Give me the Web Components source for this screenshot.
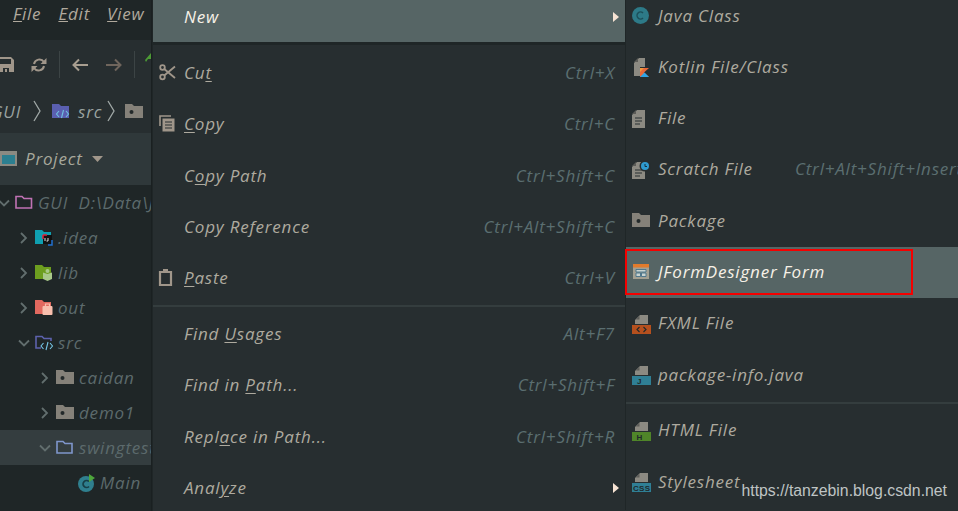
<!DOCTYPE html>
<html>
<head>
<meta charset="utf-8">
<title>IDE context menu</title>
<style>
  html, body { margin: 0; height: 100%; background: #272e30; overflow: hidden; }
  body { font: italic 17px/1 "Open Sans", sans-serif; letter-spacing: .8px; }
  u { text-underline-offset: 2px; text-decoration-thickness: 1px; }
</style>
</head>
<body>
<ide-app>
  <ide-sidebar slot="side">
    <tree-row depth="0" chevron="open" icon="folder-pink" dim="1">GUI&nbsp; D:\Data\Java</tree-row>
    <tree-row depth="1" chevron="closed" icon="folder-idea">.idea</tree-row>
    <tree-row depth="1" chevron="closed" icon="folder-lib">lib</tree-row>
    <tree-row depth="1" chevron="closed" icon="folder-out">out</tree-row>
    <tree-row depth="1" chevron="open" icon="folder-src">src</tree-row>
    <tree-row depth="2" chevron="closed" icon="package">caidan</tree-row>
    <tree-row depth="2" chevron="closed" icon="package">demo1</tree-row>
    <tree-row depth="2" chevron="open" icon="folder-blue" selected>swingtest</tree-row>
    <tree-row depth="3" icon="main">Main</tree-row>
  </ide-sidebar>

  <ctx-menu slot="menu" kind="main">
    <menu-row active arrow>New</menu-row>
    <menu-sep tone="dark"></menu-sep>
    <menu-row icon="cut" shortcut="Ctrl+X">Cu<u>t</u></menu-row>
    <menu-row icon="copy" shortcut="Ctrl+C"><u>C</u>opy</menu-row>
    <menu-row shortcut="Ctrl+Shift+C">C<u>o</u>py Path</menu-row>
    <menu-row shortcut="Ctrl+Alt+Shift+C">Copy Reference</menu-row>
    <menu-row icon="paste" shortcut="Ctrl+V"><u>P</u>aste</menu-row>
    <menu-sep></menu-sep>
    <menu-row shortcut="Alt+F7">Find <u>U</u>sages</menu-row>
    <menu-row shortcut="Ctrl+Shift+F">Find in <u>P</u>ath...</menu-row>
    <menu-row shortcut="Ctrl+Shift+R">Repl<u>a</u>ce in Path...</menu-row>
    <menu-row arrow>Anal<u>y</u>ze</menu-row>
  </ctx-menu>

  <ctx-menu slot="sub" kind="sub">
    <menu-row icon="java-class">Java Class</menu-row>
    <menu-row icon="kotlin">Kotlin File/Class</menu-row>
    <menu-row icon="file">File</menu-row>
    <menu-row icon="scratch" shortcut="Ctrl+Alt+Shift+Insert">Scratch File</menu-row>
    <menu-row icon="package">Package</menu-row>
    <menu-row icon="jform" active marked>JFormDesigner Form</menu-row>
    <menu-row icon="fxml">FXML File</menu-row>
    <menu-row icon="pkginfo">package-info.java</menu-row>
    <menu-sep></menu-sep>
    <menu-row icon="html">HTML File</menu-row>
    <menu-row icon="css">Stylesheet</menu-row>
  </ctx-menu>

  <span slot="mark">https://tanzebin.blog.csdn.net</span>
</ide-app>

<script>
const page = (band, label) => `
  <path d="M8 0h8v9H3V5z" fill="#8c8a82"/><path d="M7.500 1v3.500H4z" fill="#5c5c58"/>
  <rect x="0" y="10" width="19" height="9" fill="${band}"/>${label}`;
const bandText = (s, x) => `<text x="${x}" y="17.500" font-family="Liberation Sans" font-style="normal" font-weight="700" font-size="8" letter-spacing="0.3" fill="#20292b">${s}</text>`;

const ICONS = {
  save: `<path d="M0 0h13l3 3v12H0z" fill="#a0968a"/><rect x="0" y="2" width="13" height="5" fill="#272e30"/><rect x="5" y="11" width="6" height="4" fill="#272e30"/><rect x="7" y="12" width="2" height="3" fill="#a0968a"/>`,
  refresh: `<g fill="none" stroke="#a0968a" stroke-width="2"><path d="M3 7a5.500 5.500 0 0 1 10-2"/><path d="M13 9a5.500 5.500 0 0 1-10 2"/></g><path d="M15.500 1v6h-6zM.5 15V9h6z" fill="#a0968a"/>`,
  back: `<path d="M17 8H3M8 2.500 2.500 8 8 13.500" fill="none" stroke="#a89e90" stroke-width="2"/>`,
  forward: `<path d="M0 8h14M9 2.500 14.500 8 9 13.500" fill="none" stroke="#6f655c" stroke-width="2"/>`,
  build: `<path d="M0 7 6 0l2 2v4H3l-2 3z" fill="#4c9a35"/>`,
  'folder-src-solid': `<path d="M0 1h7l2 2h8v12H0z" fill="#5a5fb0"/><path d="M7 8 4.500 11 7 14M14 8l2.500 3-2.500 3M11.500 7 9.500 15" fill="none" stroke="#6fc0e0" stroke-width="1.100"/>`,
  package: `<path d="M0 1h7l2 2h9v12H0z" fill="#858179"/><circle cx="6.500" cy="9" r="2" fill="#23292a"/>`,
  window: `<rect x="0" y="0" width="17" height="15" fill="#8b8a82"/><rect x="2" y="4" width="13" height="9" fill="#2c7f90"/>`,
  caret: `<path d="M0 0h11L5.500 6z" fill="#a0968a"/>`,
  'folder-pink': `<path d="M1 2.500h6l2 2h7.500v9.500H1z" fill="none" stroke="#c072b4" stroke-width="1.600"/>`,
  'folder-idea': `<path d="M0 1h7l2 2h7v12H0z" fill="#0f9fb0"/><rect x="8" y="6" width="9" height="9" fill="#111"/><path d="M8 6h4M8 6v4" stroke="#e0203a" stroke-width="1.500"/><path d="M17 11v5h-4" stroke="#2070d0" stroke-width="1.500" fill="none"/><path d="M10 9v3M13 9v3h-1.500" stroke="#ddd" stroke-width="1" fill="none"/>`,
  'folder-lib': `<path d="M0 1h7l2 2h7v12H0z" fill="#6d9e1f"/><path d="M8 8.500 12.500 10 17 8.500V15l-4.500 2L8 15z" fill="#a9c98a"/><circle cx="12.500" cy="7" r="2" fill="#a9c98a"/>`,
  'folder-out': `<path d="M0 1h7l2 2h7v12H0z" fill="#e2695f"/><rect x="7.500" y="7" width="10" height="9" rx="1" fill="#f8bfae"/><path d="M10.500 7V5h4v2" fill="none" stroke="#f8bfae" stroke-width="1.200"/>`,
  'folder-src': `<path d="M1 2.500h6l2 2h7v9.500H1z" fill="none" stroke="#5d62ad" stroke-width="1.600"/><rect x="6" y="7" width="12" height="10" fill="#1f2627"/><path d="M8.500 9 6 12l2.500 3M15 9l2.500 3-2.500 3M13 8l-2 8" fill="none" stroke="#75c6e6" stroke-width="1.100"/>`,
  'folder-blue': `<path d="M1 2.500h6l2 2h7v9.500H1z" fill="none" stroke="#7f96cc" stroke-width="1.600"/>`,
  main: `<circle cx="9" cy="10" r="8" fill="#2f7f8e"/><path d="M12 7.500a3.500 3.500 0 1 0 0 5" fill="none" stroke="#173f47" stroke-width="1.700"/><path d="M12 0l6 4-6 4z" fill="#4ea63c"/>`,
  cut: `<g fill="none" stroke="#a0968a" stroke-width="1.800"><circle cx="3.500" cy="3.500" r="2.300"/><circle cx="3.500" cy="13" r="2.300"/><path d="M5.200 5 16 14M5.200 11.500 16 2.500"/></g>`,
  copy: `<path d="M1 11V1h11" fill="none" stroke="#a0968a" stroke-width="1.600"/><rect x="3.500" y="3.500" width="12" height="13" fill="#a0968a"/><path d="M6 7h7M6 10h7M6 13h7" stroke="#272e30" stroke-width="1.200"/>`,
  paste: `<path d="M1 3h11v13H1z" fill="none" stroke="#a0968a" stroke-width="2.200"/><rect x="4" y="0" width="5" height="4" fill="#a0968a"/>`,
  'java-class': `<circle cx="8.500" cy="8.500" r="8.500" fill="#2d7a88"/><path d="M11 6a3.500 3.500 0 1 0 0 5" fill="none" stroke="#1c4f59" stroke-width="1.500"/>`,
  kotlin: `<path d="M7 0h6v18H2V5z" fill="#8c8a82"/><path d="M6 0v4H2z" fill="#5c5c58"/><rect x="8" y="9" width="10" height="10" fill="#272e30"/><path d="M8 10h9l-5 4.500L17 19H8z" fill="#e9683a"/><path d="M8 10h4l-4 4z" fill="#f39a3c"/><path d="M8 19l4.500-4.500L17 19z" fill="#2ea4e6"/>`,
  file: `<path d="M5 0h8v18H0V5z" fill="#8c8a82"/><path d="M4 0v4H0z" fill="#5c5c58"/><path d="M3 8h7M3 11h7M3 14h5" stroke="#272e30" stroke-width="1.100"/>`,
  scratch: `<path d="M5 1h8v17H0V6z" fill="#8c8a82"/><path d="M4 1v4H0z" fill="#5c5c58"/><path d="M3 9h7M3 12h7M3 15h5" stroke="#272e30" stroke-width="1.100"/><circle cx="13" cy="5" r="5.500" fill="#272e30"/><circle cx="13" cy="5" r="4" fill="#2f9bd0"/><path d="M13 3v2.500h2" stroke="#12303e" stroke-width="1" fill="none"/>`,
  jform: `<g transform="translate(1 1)"><rect width="16" height="15" fill="#a3a092"/><rect width="16" height="3.500" fill="#e27b2c"/><path d="M3 5.500h10v2.500H3zM3 9h4.500v3.500H3zM8.500 9H13v3.500H8.500z" fill="#c9d3d0" stroke="#45728a" stroke-width=".9"/></g>`,
  fxml: page('#b5501e', `<path d="M7.500 12 5 14.500 7.500 17M11.500 12l2.500 2.500-2.500 2.500" fill="none" stroke="#20292b" stroke-width="1.100"/>`),
  pkginfo: page('#2f7f95', bandText('J', 5)),
  html: page('#4f8529', bandText('H', 4.500)),
  css: page('#2f7f95', bandText('CSS', 1)),
};

class IdeIcon extends HTMLElement {
  connectedCallback() {
    const size = this.getAttribute('size') || '18 18';
    const [w, h] = size.split(' ');
    this.attachShadow({ mode: 'open' });
    this.shadowRoot.innerHTML = `
      <style>
        :host { display: block; flex: none; width: ${w}px; height: ${h}px; }
        svg { display: block; overflow: visible; }
      </style>
      <svg width="${w}" height="${h}" viewBox="0 0 ${w} ${h}">${ICONS[this.getAttribute('name')] || ''}</svg>`;
  }
}
customElements.define('ide-icon', IdeIcon);

class IdeApp extends HTMLElement {
  connectedCallback() {
    this.attachShadow({ mode: 'open' });
    this.shadowRoot.innerHTML = `
      <style>
        :host { display: flex; position: relative; width: 958px; height: 511px; overflow: hidden; background: #272e30; }
        .mark {
          position: absolute; right: 11px; top: 482px;
          font: normal 15.8px/18px "Liberation Sans", sans-serif; letter-spacing: 0;
          color: #bfc4c4;
        }
      </style>
      <slot name="side"></slot>
      <slot name="menu"></slot>
      <slot name="sub"></slot>
      <div class="mark"><slot name="mark"></slot></div>`;
  }
}
customElements.define('ide-app', IdeApp);

class IdeSidebar extends HTMLElement {
  connectedCallback() {
    this.attachShadow({ mode: 'open' });
    this.shadowRoot.innerHTML = `
      <style>
        :host { display: flex; flex-direction: column; flex: none; box-sizing: border-box; width: 152px; height: 511px; overflow: hidden; background: #1f2627; border-right: 1px solid #1a2021; }
        .menubar { height: 40px; flex: none; display: flex; align-items: center; gap: 17px; padding: 0 0 14px 13px; box-sizing: border-box; color: #b0a99d; white-space: nowrap; }
        .toolbar { height: 45px; flex: none; display: flex; align-items: center; padding-top: 4px; box-sizing: border-box; background: #272e30; }
        .toolbar .v { width: 1px; height: 27px; background: #3c4445; flex: none; }
        .crumbs { height: 48px; flex: none; display: flex; align-items: center; box-sizing: border-box; padding-top: 4px; background: #272e30; color: #9aa3a0; white-space: nowrap; }
        .project { height: 52px; flex: none; display: flex; align-items: center; box-sizing: border-box; padding-bottom: 1px; background: #2f383a; color: #a8a89c; }
        .tree { display: flex; flex-direction: column; }
      </style>
      <div class="menubar"><span><u>F</u>ile</span><span><u>E</u>dit</span><span><u>V</u>iew</span></div>
      <div class="toolbar">
        <ide-icon name="save" size="16 16" style="margin-left:-2px"></ide-icon>
        <ide-icon name="refresh" size="16 16" style="margin-left:17px"></ide-icon>
        <div class="v" style="margin-left:12px"></div>
        <ide-icon name="back" size="18 16" style="margin-left:11px"></ide-icon>
        <ide-icon name="forward" size="18 16" style="margin-left:17px"></ide-icon>
        <div class="v" style="margin-left:10px"></div>
        <ide-icon name="build" size="8 9" style="margin:-14px 0 0 10px"></ide-icon>
      </div>
      <div class="crumbs">
        <span style="margin-left:-9px;width:29px">GUI</span>
        <svg width="9" height="22" viewBox="0 0 9 22" style="margin-left:13px;flex:none"><path d="M1 1l6 10-6 10" fill="none" stroke="#a0a8a6" stroke-width="1.300"/></svg>
        <ide-icon name="folder-src-solid" size="17 16" style="margin-left:10px"></ide-icon>
        <span style="margin-left:9px;width:22px">src</span>
        <svg width="9" height="22" viewBox="0 0 9 22" style="margin-left:7px;flex:none"><path d="M1 1l6 10-6 10" fill="none" stroke="#a0a8a6" stroke-width="1.300"/></svg>
        <ide-icon name="package" size="18 16" style="margin-left:9px"></ide-icon>
      </div>
      <div class="project">
        <ide-icon name="window" size="17 15"></ide-icon>
        <span style="margin-left:8px;width:58px">Project</span>
        <ide-icon name="caret" size="11 6" style="margin-left:9px"></ide-icon>
      </div>
      <div class="tree"><slot></slot></div>`;
  }
}
customElements.define('ide-sidebar', IdeSidebar);

class TreeRow extends HTMLElement {
  connectedCallback() {
    const depth = +this.getAttribute('depth');
    const offset = [-2, 18, 39, 60][depth];
    const chev = this.getAttribute('chevron');
    const path = chev === 'open' ? 'M1 3.500 6 8.500 11 3.500' : chev === 'closed' ? 'M3 1 8 6 3 11' : '';
    this.attachShadow({ mode: 'open' });
    this.shadowRoot.innerHTML = `
      <style>
        :host { display: flex; align-items: center; height: 35px; color: #5c6a6c; white-space: nowrap; overflow: hidden; }
        :host([selected]) { background: #343d3f; }
        svg.c { flex: none; width: 12px; height: 12px; margin-left: ${offset}px; }
        ide-icon { margin-left: 5px; }
        .t { margin-left: 5px; }
      </style>
      <svg class="c" viewBox="0 0 12 12"><path d="${path}" fill="none" stroke="#626e6e" stroke-width="1.800"/></svg>
      <ide-icon name="${this.getAttribute('icon')}" size="18 18"></ide-icon>
      <span class="t"><slot></slot></span>`;
  }
}
customElements.define('tree-row', TreeRow);

class CtxMenu extends HTMLElement {
  connectedCallback() {
    const sub = this.getAttribute('kind') === 'sub';
    this.attachShadow({ mode: 'open' });
    this.shadowRoot.innerHTML = `
      <style>
        :host {
          display: flex; flex-direction: column; flex: none; box-sizing: border-box;
          width: ${sub ? 348 : 473}px; height: 520px; margin-top: ${sub ? -9.65 : -9}px;
          background: #272e30; border-left: 1px solid #1f2627;
          --pad: 6px; --icon: ${sub ? 18 : 16}px; --gap: ${sub ? 8 : 9}px; --lift: ${sub ? 2 : 1}px;
        }
      </style>
      <slot></slot>`;
  }
}
customElements.define('ctx-menu', CtxMenu);

class MenuRow extends HTMLElement {
  connectedCallback() {
    const icon = this.getAttribute('icon');
    const shortcut = this.getAttribute('shortcut');
    this.attachShadow({ mode: 'open' });
    this.shadowRoot.innerHTML = `
      <style>
        :host {
          display: flex; align-items: center; position: relative; flex: none;
          height: 51.3px; box-sizing: border-box; padding: 0 10px 0 var(--pad);
          color: #aeaa9f; white-space: nowrap;
        }
        :host([active]) { background: #566565; color: #f6f1e7; }
        :host([marked])::after {
          content: ""; position: absolute; left: -1px; top: 2px; width: 284px; height: 42px;
          border: 2px solid #f50000;
        }
        .i { flex: none; width: var(--icon); margin-right: var(--gap); }
        .l { margin-bottom: var(--lift); }
        .s { margin-left: auto; margin-bottom: var(--lift); color: #5b6e70; flex: none; }
        .a { margin-left: auto; flex: none; width: 0; height: 0; margin-right: -4px; border-left: 6px solid #f6e3d3; border-top: 5px solid transparent; border-bottom: 5px solid transparent; }
      </style>
      <div class="i">${icon ? `<ide-icon name="${icon}" size="18 18"></ide-icon>` : ''}</div>
      <span class="l"><slot></slot></span>
      ${shortcut ? `<span class="s">${shortcut}</span>` : ''}
      ${this.hasAttribute('arrow') ? '<div class="a"></div>' : ''}`;
  }
}
customElements.define('menu-row', MenuRow);

class MenuSep extends HTMLElement {
  connectedCallback() {
    this.attachShadow({ mode: 'open' });
    this.shadowRoot.innerHTML = `
      <style>
        :host { display: flex; align-items: center; flex: none; height: 4.5px; }
        div { height: 2px; width: 100%; background: #343d3e; }
        :host([tone="dark"]) { height: 5px; align-items: flex-start; }
        :host([tone="dark"]) div { height: 3px; background: #1f2627; }
      </style>
      <div></div>`;
  }
}
customElements.define('menu-sep', MenuSep);
</script>
</body>
</html>
